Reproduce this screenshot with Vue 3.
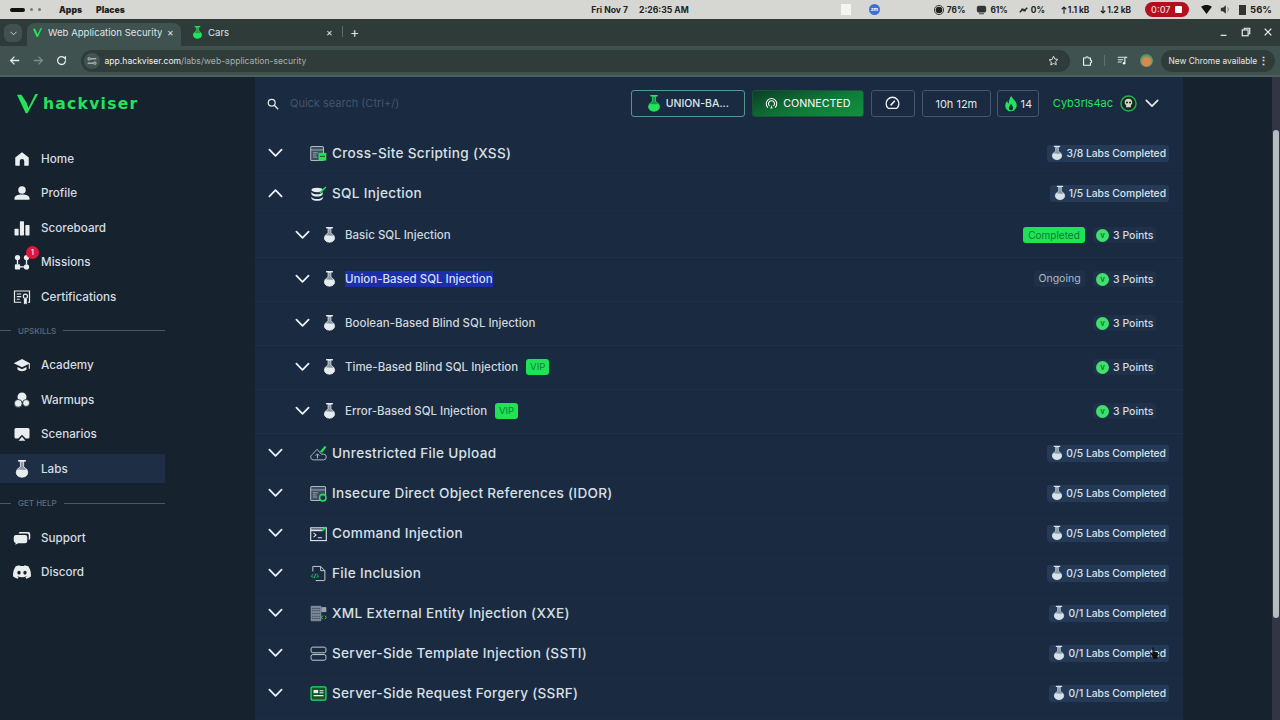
<template>
  <div class="screen">
    <svg class="defs" aria-hidden="true">
      <symbol id="flask" viewBox="3 1 18 22">
        <path d="M8 2h8" fill="none" stroke="currentColor" stroke-width="2" stroke-linecap="round" />
        <path d="M10 3v6.500C6.800 11 5 13.600 5 16.300 5 19.600 8 22 12 22s7-2.400 7-5.700c0-2.700-1.800-5.300-5-6.800V3z" fill="currentColor" fill-opacity=".55" stroke="currentColor" stroke-width="1" />
        <path d="M5 16.300C5 19.600 8 22 12 22s7-2.400 7-5.700c0-1.400-.5-2.800-1.400-4-3 1.700-7 .2-11 .2-1 1.200-1.600 2.500-1.600 3.800z" fill="currentColor" />
      </symbol>
      <symbol id="home" viewBox="0 0 24 24">
        <path d="M12 3 3 10v10a1 1 0 0 0 1 1h5v-6a3 3 0 0 1 6 0v6h5a1 1 0 0 0 1-1V10z" fill="currentColor" />
      </symbol>
      <symbol id="profile" viewBox="0 0 24 24">
        <circle cx="12" cy="8" r="5" fill="currentColor" />
        <path d="M2 21v-2c0-3 4-5 10-5s10 2 10 5v2z" fill="currentColor" />
      </symbol>
      <symbol id="scoreboard" viewBox="0 0 24 24">
        <rect x="2" y="13" width="5.500" height="9" rx="1" fill="currentColor" />
        <rect x="9.200" y="3" width="5.500" height="19" rx="1" fill="currentColor" />
        <rect x="16.500" y="8" width="5.500" height="14" rx="1" fill="currentColor" />
      </symbol>
      <symbol id="missions" viewBox="0 0 24 24">
        <circle cx="6" cy="6" r="3.500" fill="currentColor" />
        <circle cx="18" cy="6" r="3.500" fill="currentColor" />
        <rect x="2.500" y="15" width="7" height="7" rx="1" fill="currentColor" />
        <circle cx="18" cy="18.500" r="3.500" fill="currentColor" />
        <path d="M6 9v6M18 9v6M9 18.500h6" stroke="currentColor" stroke-width="1.800" />
      </symbol>
      <symbol id="cert" viewBox="0 0 24 24">
        <path d="M11 19H2V4h20v15h-2" fill="none" stroke="currentColor" stroke-width="1.600" />
        <path d="M5 8h6M5 11.500h6M5 15h4" stroke="currentColor" stroke-width="1.500" />
        <circle cx="16.500" cy="11" r="2.800" fill="none" stroke="currentColor" stroke-width="1.500" />
        <path d="M14.500 14.500V22l2-1.500 2 1.500v-7.500z" fill="currentColor" />
      </symbol>
      <symbol id="academy" viewBox="0 0 24 24">
        <path d="M12 4 1 9.500 12 15l9-4.500V17h1.500V9.500z" fill="currentColor" />
        <path d="M6 14.500V18c1.500 1.500 3.700 2.300 6 2.300s4.500-.8 6-2.300v-3.500L12 17.500z" fill="currentColor" />
      </symbol>
      <symbol id="warmups" viewBox="0 0 24 24">
        <circle cx="12" cy="8" r="6" fill="currentColor" />
        <circle cx="7" cy="16.500" r="5.200" fill="currentColor" stroke="#17222f" stroke-width="1" />
        <circle cx="17.500" cy="16" r="4.600" fill="currentColor" stroke="#17222f" stroke-width="1" />
      </symbol>
      <symbol id="scenarios" viewBox="0 0 24 24">
        <path d="M4 4h16a2 2 0 0 1 2 2v10a2 2 0 0 1-2 2h-3l-5-5-5 5H4a2 2 0 0 1-2-2V6a2 2 0 0 1 2-2z" fill="currentColor" />
        <path d="M12 15.500 16.500 21h-9z" fill="currentColor" />
      </symbol>
      <symbol id="support" viewBox="0 0 24 24">
        <path d="M9 4h11a3 3 0 0 1 3 3v5a3 3 0 0 1-2 2.800V8a2 2 0 0 0-2-2H7.500A3 3 0 0 1 9 4z" fill="currentColor" />
        <path d="M4 8h12a3 3 0 0 1 3 3v5a3 3 0 0 1-3 3H7l-4 2 .6-2.500A3 3 0 0 1 1 16v-5a3 3 0 0 1 3-3z" fill="currentColor" />
      </symbol>
      <symbol id="discord" viewBox="0 0 24 24">
        <path d="M20.317 4.37a19.791 19.791 0 0 0-4.885-1.515.074.074 0 0 0-.079.037c-.21.375-.444.864-.608 1.25a18.27 18.27 0 0 0-5.487 0 12.64 12.64 0 0 0-.617-1.25.077.077 0 0 0-.079-.037A19.736 19.736 0 0 0 3.677 4.37a.07.07 0 0 0-.032.027C.533 9.046-.32 13.58.099 18.057a.082.082 0 0 0 .031.057 19.9 19.9 0 0 0 5.993 3.03.078.078 0 0 0 .084-.028 14.09 14.09 0 0 0 1.226-1.994.076.076 0 0 0-.041-.106 13.107 13.107 0 0 1-1.872-.892.077.077 0 0 1-.008-.128 10.2 10.2 0 0 0 .372-.292.074.074 0 0 1 .077-.01c3.928 1.793 8.18 1.793 12.062 0a.074.074 0 0 1 .078.01c.12.098.246.198.373.292a.077.077 0 0 1-.006.127 12.299 12.299 0 0 1-1.873.892.077.077 0 0 0-.041.107c.36.698.772 1.362 1.225 1.993a.076.076 0 0 0 .084.028 19.839 19.839 0 0 0 6.002-3.03.077.077 0 0 0 .032-.054c.5-5.177-.838-9.674-3.549-13.66a.061.061 0 0 0-.031-.03zM8.020 15.330c-1.183 0-2.157-1.085-2.157-2.419 0-1.333.956-2.419 2.157-2.419 1.210 0 2.176 1.096 2.157 2.420 0 1.333-.956 2.418-2.157 2.418zm7.975 0c-1.183 0-2.157-1.085-2.157-2.419 0-1.333.955-2.419 2.157-2.419 1.210 0 2.176 1.096 2.157 2.420 0 1.333-.946 2.418-2.157 2.418z" fill="currentColor" />
      </symbol>
      <symbol id="chev" viewBox="0 0 16 10">
        <path d="M1.500 1.500 8 8l6.500-6.500" fill="none" stroke="currentColor" stroke-width="1.900" stroke-linecap="round" stroke-linejoin="round" />
      </symbol>
      <symbol id="xss" viewBox="0 0 24 24">
        <rect x="1" y="2" width="18" height="20" rx="1.500" fill="#3d4e60" stroke="#aeb8c2" stroke-width="1.500" />
        <path d="M1 7h18M4 11h7M4 14h5M4 17h6" stroke="#aeb8c2" stroke-width="1.200" />
        <rect x="12" y="11" width="11" height="11" fill="#1fe35a" />
        <path d="M14 16h7" stroke="#14532d" stroke-width="1.500" />
      </symbol>
      <symbol id="sql" viewBox="0 0 24 24">
        <ellipse cx="10" cy="7" rx="8" ry="3.200" fill="#e8edf0" />
        <path d="M2 10c1 2.300 4 3.200 8 3.200s7-.9 8-3.200v3.200c-1 2.300-4 3.200-8 3.200s-7-.9-8-3.200z" fill="#e8edf0" />
        <path d="M2 16.500c1 2.300 4 3.200 8 3.200s7-.9 8-3.200v2.700c-1 2.300-4 3.200-8 3.200s-7-.9-8-3.200z" fill="#e8edf0" />
        <path d="M13 10 22 2l1.200 1.400-8.500 8.600z" fill="#1fe35a" />
      </symbol>
      <symbol id="upload" viewBox="0 0 24 24">
        <path d="M5 21a4 4 0 0 1-2-7.500L10 6l6 7h3a4 4 0 0 1 0 8z" fill="none" stroke="#aeb8c2" stroke-width="1.400" />
        <path d="M10.500 19v-6M8 15l2.500-2.500L13 15" fill="none" stroke="#aeb8c2" stroke-width="1.400" />
        <path d="M14 9l7-8 2 2-6 8z" fill="#1fe35a" />
      </symbol>
      <symbol id="idor" viewBox="0 0 24 24">
        <rect x="1" y="2" width="21" height="20" rx="1.500" fill="#3d4e60" stroke="#aeb8c2" stroke-width="1.500" />
        <path d="M1 7h21M4 11h7M4 14h5M4 17h6" stroke="#aeb8c2" stroke-width="1.200" />
        <circle cx="18" cy="18" r="4.500" fill="#15324a" stroke="#1fe35a" stroke-width="2" />
        <path d="M15.500 13.500h5" stroke="#1fe35a" stroke-width="2" />
      </symbol>
      <symbol id="cmd" viewBox="0 0 24 24">
        <rect x="1" y="4" width="22" height="18" fill="none" stroke="#dfe5ea" stroke-width="1.600" />
        <path d="M1 7.500h16" stroke="#dfe5ea" stroke-width="2.500" />
        <path d="M5 11l3.500 3L5 17M11 18h6" fill="none" stroke="#dfe5ea" stroke-width="1.500" />
        <path d="M16 8l5-6 2 2-5 5z" fill="#1fe35a" />
      </symbol>
      <symbol id="file" viewBox="0 0 24 24">
        <path d="M4 9V2h11l6 6v13a1 1 0 0 1-1 1H8" fill="none" stroke="#c4ccd4" stroke-width="1.400" />
        <path d="M15 2v6h6" fill="none" stroke="#c4ccd4" stroke-width="1.400" />
        <path d="M4.500 13 2 15.500 4.500 18M9.500 13l2.500 2.500L9.500 18M8 12.500l-2 6" fill="none" stroke="#1fe35a" stroke-width="1.300" />
      </symbol>
      <symbol id="xxe" viewBox="0 0 24 24">
        <rect x="1" y="1" width="15" height="22" rx="1" fill="#7b8794" />
        <path d="M3 5h11M3 8h11M3 12h11M3 16h11M3 19h11" stroke="#3b4a5a" stroke-width="1.300" stroke-dasharray="2 1" />
        <rect x="16" y="3" width="7" height="7" fill="#9aa5b1" />
        <path d="M18 15l-2 2.500 2 2.500M21 15l2 2.500-2 2.500" fill="none" stroke="#1fe35a" stroke-width="1.400" />
      </symbol>
      <symbol id="ssti" viewBox="0 0 24 24">
        <rect x="1.500" y="3" width="21" height="8" rx="2.500" fill="none" stroke="#c4ccd4" stroke-width="1.400" />
        <rect x="1.500" y="13.500" width="21" height="8" rx="2.500" fill="none" stroke="#c4ccd4" stroke-width="1.400" />
      </symbol>
      <symbol id="ssrf" viewBox="0 0 24 24">
        <rect x="1.500" y="2.500" width="21" height="19" rx="2" fill="#14532d" stroke="#1fe35a" stroke-width="1.800" />
        <rect x="5" y="7" width="6.500" height="4.500" fill="#e8edf0" />
        <path d="M13.500 8h5.500M13.500 11h5.500M5 15h14" stroke="#e8edf0" stroke-width="1.500" />
      </symbol>
      <symbol id="fire" viewBox="3 0 18 24">
        <path d="M12.500 1c1 4 6.500 6.500 7.500 12.500.7 4.700-3 9.500-8 9.500s-8.500-4-8-9c.2-2.300 1.300-4.300 2.800-5.700.1 1.700.7 3 2 3.700C8.500 8 10.500 4.500 12.500 1zm-.3 11c-.5 2.200-3.200 3.600-3.200 6.200 0 2 1.400 3.300 3 3.300s3-1.300 3-3.300c0-2.600-2.300-3.700-2.800-6.200z" fill="#22e45c" />
      </symbol>
    </svg>

    <div class="os-bar">
      <div class="os-left">
        <span class="os-dots"><i class="pill"></i><i></i><i></i></span>
        <b class="os-apps">Apps</b>
        <b class="os-places">Places</b>
      </div>
      <div class="os-clock"><span>Fri Nov 7</span><span>2:26:35 AM</span></div>
      <div class="os-tray">
        <i class="tray-white"></i>
        <i class="tray-zoom">zm</i>
        <span class="tray-stat tray-cpu">
          <svg viewBox="0 0 12 12" width="10" height="10"><circle cx="6" cy="6" r="4" fill="#222" /><circle cx="6" cy="6" r="5.500" fill="none" stroke="#222" /></svg>76%
        </span>
        <span class="tray-stat">
          <svg viewBox="0 0 12 12" width="11" height="10"><rect x="1" y="1.500" width="10" height="7" rx="1.500" fill="#333" stroke="#222" /><path d="M3 10.500h6" stroke="#222" /></svg>61%
        </span>
        <span class="tray-stat tray-net">
          <svg viewBox="0 0 12 12" width="9" height="10"><path d="M1 9l4-4M11 3 7 7M3 5l2 0 0 2M9 7 7 7 7 5" fill="none" stroke="#222" stroke-width="2" /></svg>0%
        </span>
        <span class="tray-stat tray-up">
          <svg viewBox="0 0 8 12" width="6" height="10"><path d="M4 11V2M1 5l3-3 3 3" fill="none" stroke="#222" stroke-width="1.500" /></svg>1.1 kB
        </span>
        <span class="tray-stat tray-down">
          <svg viewBox="0 0 8 12" width="6" height="10"><path d="M4 1v9M1 7l3 3 3-3" fill="none" stroke="#222" stroke-width="1.500" /></svg>1.2 kB
        </span>
        <span class="tray-rec">0:07<i></i></span>
        <svg class="tray-wifi" viewBox="0 0 12 10" width="11" height="9"><path d="M0 2c3.500-2.600 8.500-2.600 12 0L6 10z" fill="#111" /></svg>
        <svg class="tray-vol" viewBox="0 0 12 12" width="10" height="11"><path d="M1 4h2.500L7 1v10L3.500 8H1z" fill="#333" /><path d="M9 3.500c1.300 1.500 1.300 3.500 0 5" fill="none" stroke="#777" stroke-width="1.200" /></svg>
        <i class="tray-batt"></i>
        <span class="tray-pct">56%</span>
      </div>
    </div>

    <div class="tab-strip">
      <span class="tab-menu">
        <svg viewBox="0 0 16 10" width="7" height="5"><use href="#chev" /></svg>
      </span>
      <div class="tab tab--active">
        <svg class="tab-logo" viewBox="0 0 24 24" width="11" height="11"><path d="M2 4h5l5 12L19 2h3l-9 20h-3z" fill="#22e45c" /></svg>
        <span class="tab-title">Web Application Security</span>
        <span class="tab-close">✕</span>
      </div>
      <div class="tab tab--idle">
        <svg class="tab-flask" width="11" height="13"><use href="#flask" /></svg>
        <span class="tab-title">Cars</span>
        <span class="tab-close">✕</span>
      </div>
      <i class="tab-sep"></i>
      <span class="tab-new">+</span>
      <div class="win-btns">
        <svg viewBox="0 0 12 12" width="10" height="10"><path d="M2 10h7" stroke="#eef1f1" stroke-width="1.400" /></svg>
        <svg viewBox="0 0 12 12" width="10" height="10"><rect x="1.500" y="3.500" width="7" height="7" fill="none" stroke="#eef1f1" stroke-width="1.400" /><path d="M4 3V1.500h6.500V8H9" fill="none" stroke="#eef1f1" stroke-width="1.400" /></svg>
        <svg viewBox="0 0 12 12" width="10" height="10"><path d="M2 2l8 8M10 2l-8 8" stroke="#eef1f1" stroke-width="1.500" /></svg>
      </div>
    </div>

    <div class="toolbar">
      <svg class="tool-btn" viewBox="0 0 14 14" width="11" height="11"><path d="M13 7H2M7 2 2 7l5 5" fill="none" stroke="#e6ebeb" stroke-width="1.600" /></svg>
      <svg class="tool-btn tool-btn--off" viewBox="0 0 14 14" width="11" height="11"><path d="M1 7h11M7 2l5 5-5 5" fill="none" stroke="#7d8d8c" stroke-width="1.600" /></svg>
      <svg class="tool-btn" viewBox="0 0 14 14" width="11" height="11"><path d="M12 7a5 5 0 1 1-1.500-3.500L12 5V1.500" fill="none" stroke="#e6ebeb" stroke-width="1.600" /></svg>
      <div class="omnibox">
        <span class="omni-tune">
          <svg viewBox="0 0 14 14" width="10" height="10"><path d="M5 4h8M1 10h8" stroke="#dfe5e5" stroke-width="1.300" /><circle cx="3" cy="4" r="1.700" fill="none" stroke="#dfe5e5" /><circle cx="11" cy="10" r="1.700" fill="none" stroke="#dfe5e5" /></svg>
        </span>
        <span class="omni-url">app.hackviser.com<em>/labs/web-application-security</em></span>
        <svg class="omni-star" viewBox="0 0 14 14" width="11" height="11"><path d="m7 1.500 1.700 3.600 3.900.5-2.900 2.700.8 3.900L7 10.800l-3.500 1.900.8-3.900-2.900-2.700 3.900-.5z" fill="none" stroke="#dfe5e5" stroke-width="1.200" /></svg>
      </div>
      <svg class="tool-ext" viewBox="0 0 14 14" width="12" height="12"><path d="M3 3.500h2.500a1.500 1.500 0 0 1 3 0H11V6a1.500 1.500 0 0 1 0 3v3H3z" fill="none" stroke="#eef1f1" stroke-width="1.300" /></svg>
      <i class="tool-sep"></i>
      <svg class="tool-media" viewBox="0 0 14 14" width="11" height="11"><path d="M1 3h8M1 6h7M1 9h5" stroke="#dfe5e5" stroke-width="1.300" /><path d="M10 10V3h3" fill="none" stroke="#fff" stroke-width="1.300" /><circle cx="9" cy="10.500" r="1.600" fill="#fff" /></svg>
      <span class="tool-avatar"></span>
      <div class="update-pill"><span>New Chrome available</span><b>⋮</b></div>
    </div>

    <div class="page">
      <aside class="sidebar">
        <div class="brand">
          <svg viewBox="0 0 26 24" width="23" height="21"><path d="M1 2h5l6 9 2 6 8-16h3L13 23h-2z" fill="#22e45c" /></svg>
          <span>hackviser</span>
        </div>
        <nav class="nav">
          <template v-for="item in navItems" :key="item.label">
            <div v-if="item.divider" class="nav-divider"><span>{{ item.label }}</span></div>
            <div v-else class="nav-item" :class="{ 'nav-item--active': item.active }">
              <span class="nav-icon">
                <svg width="18" height="18"><use :href="`#${item.icon}`" /></svg>
                <i v-if="item.badge" class="nav-badge">{{ item.badge }}</i>
              </span>
              <span>{{ item.label }}</span>
            </div>
          </template>
        </nav>
      </aside>

      <main class="main">
        <header class="topbar">
          <svg class="search-icon" viewBox="0 0 14 14" width="12" height="12"><circle cx="5.500" cy="5.500" r="4" fill="none" stroke="#dfe5ea" stroke-width="1.500" /><path d="m8.500 8.500 4.500 4.500" stroke="#dfe5ea" stroke-width="1.600" /></svg>
          <span class="search-text">Quick search (Ctrl+/)</span>
          <div class="top-lab">
            <svg width="14" height="17"><use href="#flask" /></svg>
            <span>UNION-BA...</span>
          </div>
          <div class="top-conn">
            <svg viewBox="0 0 16 16" width="13" height="13"><path d="M3.500 13a6.500 6.500 0 1 1 9 0M5.500 11a3.700 3.700 0 1 1 5 0" fill="none" stroke="#fff" stroke-width="1.300" /><path d="M6.500 14l1.500-4 1.500 4z" fill="#fff" /></svg>
            <span>CONNECTED</span>
          </div>
          <div class="top-box top-speed">
            <svg viewBox="0 0 16 16" width="15" height="15"><path d="M3.500 13.200a6.800 6.800 0 1 1 9 0z" fill="none" stroke="#eef2f5" stroke-width="1.400" /><path d="M6 10l4.500-5" stroke="#eef2f5" stroke-width="1.600" /></svg>
          </div>
          <div class="top-box top-time">10h 12m</div>
          <div class="top-box top-streak">
            <svg width="14" height="17"><use href="#fire" /></svg>
            <span>14</span>
          </div>
          <span class="top-user">Cyb3rls4ac</span>
          <svg class="top-avatar" viewBox="0 0 18 18" width="17" height="17">
            <circle cx="9" cy="9" r="8" fill="#16281f" stroke="#1fb54c" stroke-width="1.500" />
            <path d="M9 4c2.500 0 4 1.700 4 3.800 0 1.400-.6 2.400-1.500 3V13h-5v-2.200C5.600 10.200 5 9.200 5 7.800 5 5.700 6.500 4 9 4z" fill="#d8d8c8" />
            <circle cx="7.400" cy="8" r="1.100" fill="#16281f" />
            <circle cx="10.600" cy="8" r="1.100" fill="#16281f" />
          </svg>
          <svg class="top-chev" width="14" height="9"><use href="#chev" /></svg>
        </header>

        <div class="course-list">
          <template v-for="cat in categories" :key="cat.title">
            <div class="cat-row">
              <svg class="chev" :class="{ 'chev--up': cat.open }" width="15" height="10"><use href="#chev" /></svg>
              <svg class="cat-icon" width="17" height="17"><use :href="`#${cat.icon}`" /></svg>
              <span class="cat-title">{{ cat.title }}</span>
              <span class="cat-progress">
                <svg width="12" height="16"><use href="#flask" /></svg>
                {{ cat.progress }} Labs Completed
              </span>
            </div>
            <template v-if="cat.open">
              <div v-for="lab in labs" :key="lab.title" class="lab-row">
                <svg class="chev" width="15" height="10"><use href="#chev" /></svg>
                <svg class="lab-flask" width="13" height="16"><use href="#flask" /></svg>
                <span class="lab-title" :class="{ 'lab-title--selected': lab.selected }">{{ lab.title }}</span>
                <span v-if="lab.vip" class="vip">VIP</span>
                <span v-if="lab.status === 'Completed'" class="status-done">Completed</span>
                <span v-if="lab.status === 'Ongoing'" class="status-going">Ongoing</span>
                <span class="points"><i>v</i>3 Points</span>
              </div>
            </template>
          </template>
        </div>
        <svg class="cursor" viewBox="0 0 14 16" width="12" height="14"><path d="M4 1.500c.8-.6 1.500 0 1.500.8V7l1-.4 1 .2 1 .2 1 .3c1 .4 1 1 1 2l-.5 3.200L9.500 15H5.500L2.500 10 1.500 8.200c0-.8.800-1 1.500-.4L4 9z" fill="#111" /></svg>
      </main>

      <div class="gutter"></div>
      <div class="scrollbar"><i></i></div>
    </div>
  </div>
</template>

<script setup>
const navItems = [
  { label: 'Home', icon: 'home' },
  { label: 'Profile', icon: 'profile' },
  { label: 'Scoreboard', icon: 'scoreboard' },
  { label: 'Missions', icon: 'missions', badge: 1 },
  { label: 'Certifications', icon: 'cert' },
  { label: 'UPSKILLS', divider: true },
  { label: 'Academy', icon: 'academy' },
  { label: 'Warmups', icon: 'warmups' },
  { label: 'Scenarios', icon: 'scenarios' },
  { label: 'Labs', icon: 'flask', active: true },
  { label: 'GET HELP', divider: true },
  { label: 'Support', icon: 'support' },
  { label: 'Discord', icon: 'discord' },
]

const categories = [
  { title: 'Cross-Site Scripting (XSS)', icon: 'xss', progress: '3/8' },
  { title: 'SQL Injection', icon: 'sql', progress: '1/5', open: true },
  { title: 'Unrestricted File Upload', icon: 'upload', progress: '0/5' },
  { title: 'Insecure Direct Object References (IDOR)', icon: 'idor', progress: '0/5' },
  { title: 'Command Injection', icon: 'cmd', progress: '0/5' },
  { title: 'File Inclusion', icon: 'file', progress: '0/3' },
  { title: 'XML External Entity Injection (XXE)', icon: 'xxe', progress: '0/1' },
  { title: 'Server-Side Template Injection (SSTI)', icon: 'ssti', progress: '0/1' },
  { title: 'Server-Side Request Forgery (SSRF)', icon: 'ssrf', progress: '0/1' },
]

const labs = [
  { title: 'Basic SQL Injection', status: 'Completed' },
  { title: 'Union-Based SQL Injection', status: 'Ongoing', selected: true },
  { title: 'Boolean-Based Blind SQL Injection' },
  { title: 'Time-Based Blind SQL Injection', vip: true },
  { title: 'Error-Based SQL Injection', vip: true },
]
</script>

<style>
html,
body {
  margin: 0;
  overflow: hidden;
  background: #17222f;
}
</style>

<style scoped>
.screen {
  width: 1280px;
  height: 720px;
  display: flex;
  flex-direction: column;
  overflow: hidden;
  font-family: Inter, "Noto Sans", sans-serif;
  color: #e6ecf1;
}

.defs {
  position: absolute;
  width: 0;
  height: 0;
}

i,
em {
  font-style: normal;
}

/* desktop bar */
.os-bar {
  height: 19px;
  flex: none;
  display: grid;
  grid-template-columns: 1fr auto 1fr;
  align-items: center;
  background: #d6d6d3;
  color: #222;
  font-size: 8.600px;
  font-weight: 700;
}

.os-left {
  display: flex;
  align-items: center;
  padding-left: 10px;
}

.os-dots {
  display: flex;
  align-items: center;
  gap: 5px;
  width: 49px;
}

.os-dots i {
  width: 3px;
  height: 3px;
  border-radius: 50%;
  background: #777;
}

.os-dots .pill {
  width: 15px;
  height: 4px;
  border-radius: 2px;
  background: #111;
}

.os-apps {
  width: 37px;
}

.os-clock {
  display: flex;
  gap: 11px;
}

.os-tray {
  display: flex;
  align-items: center;
  justify-content: flex-end;
  padding-right: 8px;
}

.tray-white {
  width: 10px;
  height: 11px;
  background: #f4f4f2;
  margin-right: 18px;
}

.tray-zoom {
  width: 11px;
  height: 11px;
  border-radius: 50%;
  background: #3d6fd6;
  color: #fff;
  font-size: 5px;
  line-height: 11px;
  text-align: center;
  margin-right: 54px;
}

.tray-stat {
  display: flex;
  align-items: center;
  gap: 3px;
  margin-right: 11px;
  font-size: 8.300px;
}

.tray-net {
  margin-right: 16px;
}

.tray-up {
  gap: 1px;
  margin-right: 11px;
}

.tray-down {
  gap: 1px;
  margin-right: 14px;
}

.tray-rec {
  width: 44px;
  height: 15px;
  box-sizing: border-box;
  padding-left: 6px;
  display: flex;
  align-items: center;
  gap: 5px;
  border-radius: 8px;
  background: #b3101f;
  color: #f3d6d8;
  font-size: 9px;
  font-weight: 500;
  margin-right: 12px;
}

.tray-rec i {
  width: 7px;
  height: 7px;
  border-radius: 1px;
  background: #fff;
}

.tray-wifi {
  margin-right: 8px;
}

.tray-vol {
  margin-right: 9px;
}

.tray-batt {
  width: 7px;
  height: 10px;
  background: #333;
  margin-right: 4px;
}

.tray-pct {
  font-size: 9.500px;
}

/* browser chrome */
.tab-strip {
  height: 27px;
  flex: none;
  display: flex;
  align-items: flex-end;
  background: #2f3b39;
  color: #dfe5e5;
  font-size: 9.600px;
}

.tab-menu {
  width: 18px;
  height: 18px;
  margin: 0 5px 4px 4px;
  display: flex;
  align-items: center;
  justify-content: center;
  border-radius: 6px;
  background: #40514f;
}

.tab {
  width: 154px;
  height: 23px;
  box-sizing: border-box;
  padding: 0 7px 4px 5px;
  display: flex;
  align-items: center;
  gap: 5px;
}

.tab--idle {
  padding: 0 2px 4px 11px;
}

.tab--active {
  background: #3f5250;
  border-radius: 8px 8px 0 0;
}

.tab-logo,
.tab-flask {
  flex: none;
}

.tab-flask {
  color: #22e45c;
}

.tab-title {
  flex: 1;
  min-width: 0;
  white-space: nowrap;
  overflow: hidden;
}

.tab-close {
  font-size: 8px;
}

.tab-sep {
  width: 1px;
  height: 11px;
  margin: 0 0 9px 7px;
  background: #5b6967;
}

.tab-new {
  margin: 0 0 5px 7px;
  font-size: 14px;
  line-height: 19px;
}

.win-btns {
  margin-left: auto;
  margin-bottom: 9px;
  padding-right: 7px;
  display: flex;
  gap: 12px;
}

.toolbar {
  height: 31px;
  flex: none;
  box-sizing: border-box;
  display: flex;
  align-items: center;
  padding: 0 4px 0 9px;
  background: #3f5250;
  border-bottom: 2px solid #4d605e;
  font-size: 8.600px;
}

.tool-btn {
  margin-right: 12.500px;
  flex: none;
}

.omnibox {
  width: 989px;
  height: 22px;
  margin-left: 1px;
  display: flex;
  align-items: center;
  border-radius: 11px;
  background: #303c3a;
  flex: none;
}

.omni-tune {
  width: 16px;
  height: 16px;
  margin-left: 3px;
  display: flex;
  align-items: center;
  justify-content: center;
  border-radius: 50%;
  background: #43534f;
}

.omni-url {
  margin-left: 5px;
  color: #eef2f2;
}

.omni-url em {
  color: #a6b2b0;
}

.omni-star {
  margin-left: auto;
  margin-right: 10.500px;
}

.tool-ext {
  margin-left: 11px;
  flex: none;
}

.tool-sep {
  width: 1px;
  height: 11px;
  margin-left: 11px;
  background: #5f716f;
}

.tool-media {
  margin-left: 12px;
  flex: none;
}

.tool-avatar {
  width: 13px;
  height: 13px;
  margin-left: 12px;
  border-radius: 50%;
  background: radial-gradient(circle at 50% 60%, #d98a53 35%, #3f9a6a 70%);
  flex: none;
}

.update-pill {
  width: 114px;
  height: 22px;
  box-sizing: border-box;
  margin-left: 8px;
  padding: 0 6px 0 8px;
  display: flex;
  align-items: center;
  justify-content: space-between;
  border-radius: 11px;
  background: #303c3a;
  color: #e2e8e8;
  font-size: 8.400px;
  white-space: nowrap;
  flex: none;
}

.update-pill b {
  font-size: 11px;
}

/* page */
.page {
  flex: 1;
  min-height: 0;
  display: grid;
  grid-template-columns: 255px 928px 89px 8px;
  background: #17222f;
}

.sidebar {
  overflow: hidden;
}

.brand {
  height: 53px;
  box-sizing: border-box;
  padding: 16px 0 0 16px;
  display: flex;
  align-items: flex-start;
  gap: 4px;
  color: #22e45c;
  font-family: "DejaVu Sans", sans-serif;
  font-size: 15.500px;
  font-weight: 700;
  letter-spacing: 1.300px;
  line-height: 22px;
}

.nav {
  width: 165px;
  margin-top: 11.500px;
  display: grid;
  grid-auto-rows: 34.460px;
  align-items: center;
  font-size: 11.700px;
  font-weight: 500;
  color: #d5dde3;
}

.nav-item {
  height: 29px;
  display: flex;
  align-items: center;
  gap: 10px;
  padding-left: 13px;
}

.nav-item--active {
  background: #1d2e45;
}

.nav-icon {
  position: relative;
  width: 18px;
  height: 18px;
  color: #e9edee;
}

.nav-badge {
  position: absolute;
  top: -7px;
  right: -8px;
  width: 13px;
  height: 13px;
  border-radius: 50%;
  background: #e0163f;
  color: #fff;
  font-size: 7px;
  line-height: 13px;
  text-align: center;
}

.nav-divider {
  display: flex;
  align-items: center;
  gap: 7px;
  color: #5f6c7a;
  font-size: 8px;
  font-weight: 500;
}

.nav-divider::before {
  content: "";
  width: 11px;
  height: 1px;
  background: #4c5866;
}

.nav-divider::after {
  content: "";
  flex: 1;
  height: 1px;
  background: #4c5866;
}

.main {
  position: relative;
  overflow: hidden;
  background: #1a2a40;
}

.topbar {
  height: 56px;
  box-sizing: border-box;
  padding: 13px 24px 0 12px;
  display: flex;
  align-items: flex-start;
  font-size: 11px;
}

.search-icon {
  margin: 8px 11px 0 0;
  flex: none;
}

.search-text {
  flex: 1;
  line-height: 27px;
  color: #42546a;
}

.top-lab,
.top-conn,
.top-box {
  height: 27px;
  box-sizing: border-box;
  display: flex;
  align-items: center;
  justify-content: center;
  border-radius: 3px;
  white-space: nowrap;
}

.top-lab {
  width: 114px;
  gap: 5px;
  border: 1px solid #4d9c8b;
  color: #dce6ee;
  font-size: 10.500px;
  font-weight: 500;
}

.top-lab svg {
  color: #22e45c;
}

.top-conn {
  width: 112px;
  margin-left: 7px;
  gap: 5px;
  border: 1px solid #17542f;
  background: linear-gradient(160deg, #0c3f29 0%, #0e7a38 55%, #12913f 100%);
  color: #fff;
  font-size: 10.700px;
}

.top-box {
  margin-left: 7px;
  border: 1px solid #44566c;
  color: #dfe6ec;
}

.top-speed {
  width: 44px;
}

.top-time {
  width: 69px;
}

.top-streak {
  width: 42px;
  margin-left: 6px;
  gap: 3px;
}

.top-user {
  margin-left: 14px;
  line-height: 27px;
  color: #22e45c;
}

.top-avatar {
  margin: 5px 0 0 7px;
  flex: none;
}

.top-chev {
  margin: 9px 0 0 8px;
  color: #e9edf1;
  flex: none;
}

.course-list {
  padding-top: 0.500px;
}

.cat-row,
.lab-row {
  display: flex;
  align-items: center;
  box-sizing: border-box;
  white-space: nowrap;
}

.cat-row {
  height: 40px;
  padding: 0 14px 0 13px;
  border-bottom: 1px solid #182739;
}

.lab-row {
  height: 44px;
  padding: 0 27px 0 40px;
  border-bottom: 1px solid #1f3149;
}

.chev {
  flex: none;
  color: #eef2f5;
}

.chev--up {
  transform: rotate(180deg);
}

.cat-icon {
  margin-left: 27px;
  flex: none;
}

.cat-title {
  margin-left: 5px;
  font-size: 13.600px;
  font-weight: 500;
  letter-spacing: 0.3px;
  color: #d8e0e7;
}

.cat-progress {
  margin-left: auto;
  height: 17px;
  padding: 0 3px 0 4px;
  display: flex;
  align-items: center;
  gap: 3px;
  border-radius: 3px;
  background: #243a56;
  color: #d8e2ea;
  font-size: 10.300px;
  font-weight: 500;
}

.lab-flask {
  margin-left: 13px;
  flex: none;
  color: #e6ebef;
}

.lab-title {
  margin-left: 9px;
  padding: 1px 0;
  font-size: 11.500px;
  font-weight: 500;
  color: #cfd8df;
}

.lab-title--selected {
  background: #1c2fa8;
  color: #d5dfff;
}

.vip {
  margin-left: 8px;
  width: 23px;
  height: 16px;
  border-radius: 3px;
  background: #1ee455;
  color: #0f7d35;
  font-size: 9.500px;
  line-height: 16px;
  text-align: center;
}

.status-done {
  margin-left: auto;
  height: 16px;
  width: 62px;
  border-radius: 3px;
  background: #1ee455;
  color: #0c7a31;
  font-size: 10px;
  line-height: 16px;
  text-align: center;
}

.status-going {
  margin-left: auto;
  width: 51px;
  height: 16px;
  border-radius: 3px;
  background: #1f3149;
  color: #aebbc7;
  font-size: 10.500px;
  line-height: 16px;
  text-align: center;
}

.points {
  height: 16px;
  width: 63px;
  box-sizing: border-box;
  margin-left: 8px;
  display: flex;
  align-items: center;
  gap: 4px;
  border-radius: 3px;
  background: #1f3149;
  color: #d3dde5;
  font-size: 10.500px;
  font-weight: 500;
}

.lab-row .lab-title + .points,
.lab-row .vip + .points {
  margin-left: auto;
}

.points i {
  width: 13px;
  height: 13px;
  margin-left: 3px;
  border-radius: 50%;
  background: #3fe06b;
  color: #0d6a2c;
  font-size: 8px;
  line-height: 12px;
  text-align: center;
}

.cursor {
  position: absolute;
  left: 894px;
  top: 569px;
}

.scrollbar {
  background: #323644;
  padding-top: 53px;
}

.scrollbar i {
  display: block;
  width: 6px;
  height: 488px;
  margin-left: 1px;
  border-radius: 3px;
  background: #b5bcc2;
}
</style>
